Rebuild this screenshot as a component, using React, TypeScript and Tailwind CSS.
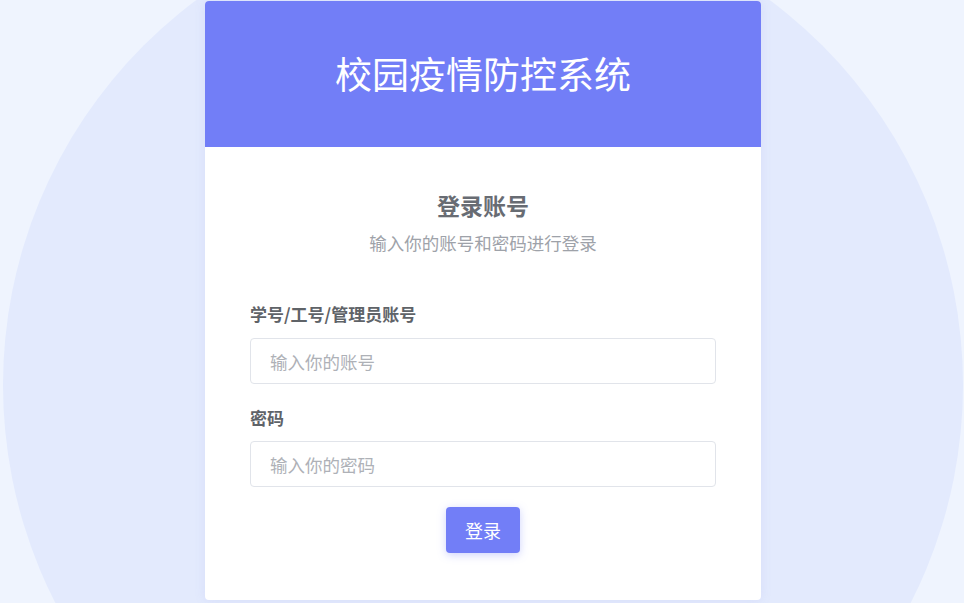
import React, { useState } from 'react';

const FONT = { fontFamily: '"Noto Sans CJK SC", "Noto Sans", sans-serif' };

export default function App() {
    const [account, setAccount] = useState('');
    const [password, setPassword] = useState('');

    return (
        <div className="relative min-h-screen w-full overflow-hidden bg-[#eff4fe] flex justify-center" style={FONT}>
            {/* decorative circle behind the card */}
            <div className="absolute left-[3px] top-[-95px] w-[960px] h-[960px] rounded-full bg-[#e3eafd]" />

            <div className="relative ml-[2px] mt-px mb-[3px] w-[556px] h-[599px] bg-white rounded-[4px] overflow-hidden shadow-[0_0_12px_rgba(120,130,220,0.12)] flex flex-col">
                <div className="h-[146px] bg-[#727ef7] flex items-center justify-center">
                    <h1 className="text-[37px] font-normal text-white">校园疫情防控系统</h1>
                </div>

                <div className="flex-1 px-[45px] pt-[43px]">
                    <h2 className="text-center text-[23px] leading-[30px] font-bold text-[#686c73]">登录账号</h2>
                    <p className="mt-[10px] text-center text-[17.5px] leading-[26px] text-[#9ea2a9]">输入你的账号和密码进行登录</p>

                    <form className="mt-[46px] flex flex-col" onSubmit={(e) => e.preventDefault()}>
                        <label className="text-[17px] leading-[24px] font-bold text-[#5f6368]">学号/工号/管理员账号</label>
                        <input
                            value={account}
                            onChange={(e) => setAccount(e.target.value)}
                            placeholder="输入你的账号"
                            className="mt-[12px] h-[46px] w-full rounded-[4px] border border-[#e1e4ea] px-[19px] text-[17.5px] text-[#555] placeholder:text-[#aeb1b7] outline-none"
                        />

                        <label className="mt-[22px] text-[17px] leading-[24px] font-bold text-[#5f6368]">密码</label>
                        <input
                            type="password"
                            value={password}
                            onChange={(e) => setPassword(e.target.value)}
                            placeholder="输入你的密码"
                            className="mt-[11px] h-[46px] w-full rounded-[4px] border border-[#e1e4ea] px-[19px] text-[17.5px] text-[#555] placeholder:text-[#aeb1b7] outline-none"
                        />

                        <div className="mt-[20px] flex justify-center">
                            <button
                                type="submit"
                                className="h-[46px] w-[74px] rounded-[4px] bg-[#727ef7] text-white text-[18px] shadow-[0_2px_8px_rgba(114,126,247,0.35)]"
                            >
                                登录
                            </button>
                        </div>
                    </form>
                </div>
            </div>
        </div>
    );
}
